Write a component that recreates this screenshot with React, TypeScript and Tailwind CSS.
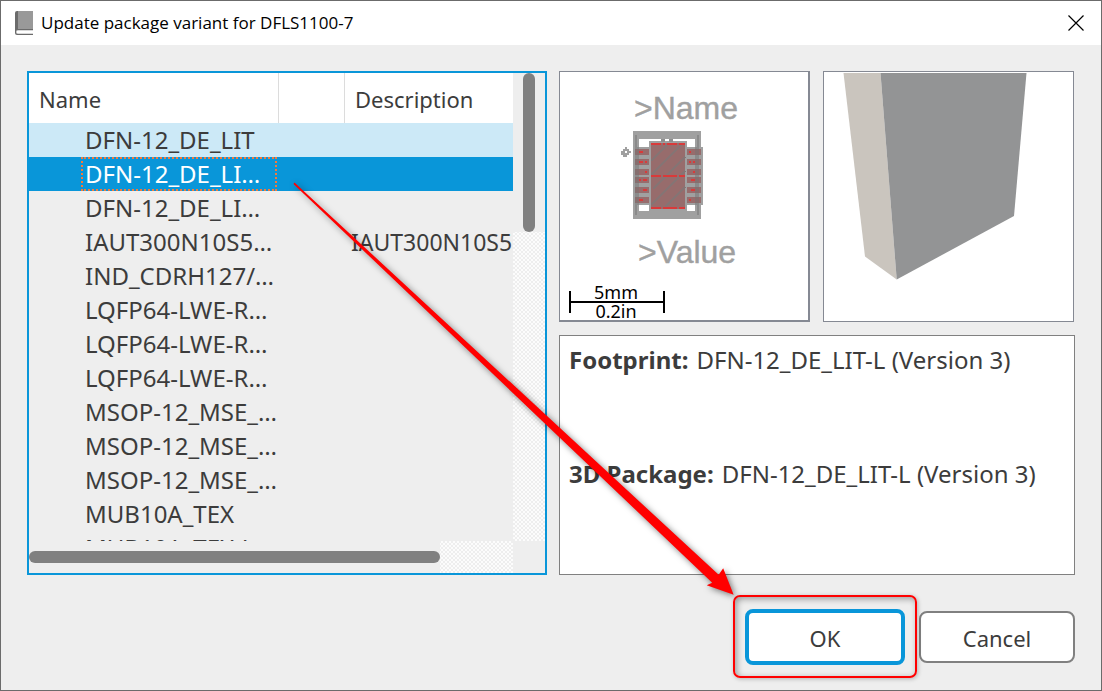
type Row = { name: string; description?: string; state?: "group" | "selected" };

const rows: Row[] = [
  { name: "DFN-12_DE_LIT", state: "group" },
  { name: "DFN-12_DE_LI…", state: "selected" },
  { name: "DFN-12_DE_LI…" },
  { name: "IAUT300N10S5…", description: "IAUT300N10S5" },
  { name: "IND_CDRH127/…" },
  { name: "LQFP64-LWE-R…" },
  { name: "LQFP64-LWE-R…" },
  { name: "LQFP64-LWE-R…" },
  { name: "MSOP-12_MSE_…" },
  { name: "MSOP-12_MSE_…" },
  { name: "MSOP-12_MSE_…" },
  { name: "MUB10A_TEX" },
  { name: "MUB10A_TEX-L" },
];

const rowStyle = {
  group: "bg-[#cce9f7]",
  selected: "bg-[#0996d9] text-white",
};

const dither =
  "bg-[repeating-conic-gradient(#eeeeee_0_25%,#fcfcfc_0_50%)] bg-[length:4px_4px]";

function BookIcon() {
  return (
    <svg width="20" height="26" viewBox="0 0 20 26" aria-hidden="true">
      <path d="M3 1H19V25H3Q1 25 1 23V3Q1 1 3 1Z" fill="#6b6b6b" />
      <rect x="4" y="1" width="15" height="18" fill="#999" />
      <path d="M4 20H19V24H4Q2 24 2 22T4 20Z" fill="#d8d8d8" />
      <rect x="3" y="21" width="16" height="2" fill="#fff" />
    </svg>
  );
}

function VariantTable() {
  return (
    <section className="flex min-w-0 flex-col border-2 border-[#0996d9]">
      <div className="flex min-h-0 flex-1">
        <div className="h-0 min-h-full min-w-0 flex-1 overflow-hidden">
          <table className="w-full table-fixed border-separate border-spacing-0 whitespace-nowrap">
            <colgroup>
              <col className="w-[250px]" />
              <col className="w-[66px]" />
              <col />
            </colgroup>
            <thead>
              <tr className="bg-white text-left text-[22px]">
                <th className="h-[50px] border-r border-[#dcdcdc] px-[10px] pt-[2px] pb-0 font-normal">Name</th>
                <th className="border-r border-[#dcdcdc]" aria-label="Type" />
                <th className="px-[10px] pt-[2px] pb-0 font-normal">Description</th>
              </tr>
            </thead>
            <tbody>
              {rows.map((row, i) => (
                <tr key={i} className={row.state && rowStyle[row.state]}>
                  <td className="h-[34px] p-0 pr-[2px] pl-[52px]">
                    <div
                      className={
                        row.state === "selected"
                          ? "h-[34px] overflow-hidden border-2 border-dotted border-[#f47a3c] px-[2px] leading-[30px]"
                          : "h-[34px] overflow-hidden px-[4px] leading-[34px]"
                      }
                    >
                      {row.name}
                    </div>
                  </td>
                  <td className="p-0" />
                  <td className="overflow-hidden p-0 pl-[6px] text-[23px]">{row.description}</td>
                </tr>
              ))}
            </tbody>
          </table>
        </div>
        <div className={`flex w-[32px] flex-col ${dither}`}>
          <div className="flex h-[34%] justify-center bg-[#eeeeee]">
            <div className="w-[12px] rounded-full bg-[#808080]" />
          </div>
        </div>
      </div>
      <div className="flex h-[32px]">
        <div className={`min-w-0 flex-1 ${dither}`}>
          <div className="flex h-full w-[85%] items-center bg-[#eeeeee]">
            <div className="h-[12px] w-full rounded-full bg-[#808080]" />
          </div>
        </div>
        <div className="w-[32px]" />
      </div>
    </section>
  );
}

const pads = [
  { y: 78, marks: [[80, 4], [130, 2]] },
  { y: 88, marks: [[80, 4], [86, 2], [130, 2], [134, 2]] },
  { y: 98, marks: [[86, 2], [134, 2]] },
  { y: 106, marks: [[80, 2], [84, 4], [132, 4]] },
  { y: 116, marks: [[84, 4], [132, 4]] },
  { y: 126, marks: [[80, 4], [130, 2]] },
];

function FootprintPreview() {
  return (
    <svg
      viewBox="1 1 248 248"
      className="block h-full w-full"
      role="img"
      aria-label="Footprint preview"
      shapeRendering="crispEdges"
    >
      <g fill="#a0a0a0" stroke="#a0a0a0" strokeWidth="0.400" fontFamily="Liberation Sans, sans-serif" fontSize="32">
        <text x="75" y="48">&gt;Name</text>
        <text x="79" y="192">&gt;Value</text>
      </g>
      <rect x="74" y="60" width="68" height="88" fill="#a0a0a0" />
      <rect x="74" y="76" width="70" height="58" fill="#a0a0a0" />
      <path d="M80 68H136V76H128V70H90V76H80ZM80 134H90V140H80ZM128 134H136V140H128Z" fill="#fff" />
      <path d="M102 68h4v3h-4zM110 68h4v3h-4z" fill="#8e8e8e" />
      <path d="M76 64h2v80h-2zM138 64h2v80h-2zM78 76h2v58h-2zM136 76h2v58h-2z" fill="#8a8a8a" />
      {pads.map(({ y, marks }) => (
        <g key={y}>
          <path d={`M80 ${y}h10v6h-10zM128 ${y}h14v6h-14z`} fill="#976c6c" />
          <path d={`M76 ${y}h4v6h-4zM136 ${y}h4v6h-4z`} fill="#866f6f" />
          {marks.map(([x, w]) => (
            <rect key={x} x={x} y={y + 2} width={w} height="2" fill="#d93a3a" />
          ))}
        </g>
      ))}
      <rect x="92" y="72" width="34" height="66" fill="#976c6c" />
      <path
        d="M92 90L108 74M92 104L122 74M94 118L126 86M92 134L126 100M106 136L126 116"
        stroke="#857474"
        strokeWidth="1.500"
      />
      <path
        d="M92 73H102M104 73H106M108 73H118M120 73H126M92 105H102M104 105H118M120 105H126M92 137H102M104 137H118M120 137H126"
        stroke="#d93a3a"
        strokeWidth="2"
      />
      <path
        d="M66 76h2v2h2v2h2v2h-2v2h-2v2h-4v-2h-2v-4h2v-2h2zM66 80v2h2v-2z"
        fill="#a0a0a0"
        fillRule="evenodd"
      />
      <path d="M11 220V242M105 220V242M11 231H105" stroke="#000" strokeWidth="2" fill="none" />
      <g fontFamily="Noto Sans, sans-serif" fontSize="18" textAnchor="middle" fill="#000">
        <text x="57" y="228">5mm</text>
        <text x="57" y="247">0.2in</text>
      </g>
    </svg>
  );
}

function PackagePreview() {
  return (
    <svg viewBox="1 1 249 249" className="block h-full w-full" role="img" aria-label="3D package preview">
      <path d="M20.500 2H57.500L73.700 208.500L42 185.500Z" fill="#cac5be" />
      <path d="M57.500 2H203.500L191 145L73.700 208.500Z" fill="#939495" />
    </svg>
  );
}

function Pointer() {
  return (
    <svg
      viewBox="0 0 1102 691"
      preserveAspectRatio="none"
      className="pointer-events-none absolute inset-0 h-full w-full"
      aria-hidden="true"
    >
      <path
        d="M294 182L719 575.500L723.500 569L734 595.500L707 586L712.500 583.500L293 183.500Z"
        fill="#f00"
        className="drop-shadow-[2px_2px_3px_rgba(0,0,0,0.5)]"
      />
    </svg>
  );
}

export default function App() {
  return (
    <div className="relative flex h-screen min-h-[600px] flex-col border border-[#6b6b6b] bg-[#eeeeee] font-['Noto_Sans',sans-serif] text-[24px] leading-[34px] text-[#3c3c3c]">
      <header className="flex h-[44px] shrink-0 items-center gap-[7px] bg-white pr-[17px] pl-[13px]">
        <BookIcon />
        <h1 className="flex-1 font-['Open_Sans',sans-serif] text-[17px] text-black">
          Update package variant for DFLS1100-7
        </h1>
        <button type="button" aria-label="Close">
          <svg width="16" height="16" viewBox="0 0 16 16" fill="none" stroke="#000" strokeWidth="1.200">
            <path d="M0.500 0.500L15.500 15.500M15.500 0.500L0.500 15.500" />
          </svg>
        </button>
      </header>

      <main className="flex min-h-0 flex-1 flex-col px-[26px] pt-[26px] pb-[25px]">
        <div className="grid min-h-0 flex-1 grid-cols-[520fr_516fr] gap-[12px]">
          <VariantTable />
          <div className="flex min-w-0 flex-col gap-[13px]">
            <div className="grid grid-cols-2 gap-[13px] pr-[1px]">
              <div className="aspect-square border border-r-2 border-b-2 border-[#858993] bg-white">
                <FootprintPreview />
              </div>
              <div className="aspect-square border border-[#858993] bg-white">
                <PackagePreview />
              </div>
            </div>
            <dl className="flex flex-1 flex-col gap-[80px] border border-[#808080] bg-white px-[9px] py-[7px]">
              <div className="flex gap-[8px]">
                <dt className="font-bold">Footprint:</dt>
                <dd>DFN-12_DE_LIT-L (Version 3)</dd>
              </div>
              <div className="flex gap-[8px]">
                <dt className="font-bold">3D Package:</dt>
                <dd>DFN-12_DE_LIT-L (Version 3)</dd>
              </div>
            </dl>
          </div>
        </div>
        <footer className="mt-[34px] flex items-center justify-end gap-[14px] text-[22px]">
          <div className="relative">
            <button
              type="button"
              className="block h-[56px] w-[160px] rounded-[8px] border-4 border-[#0996d9] bg-white pt-[2px]"
            >
              OK
            </button>
            <div className="pointer-events-none absolute -inset-x-[12px] -top-[14px] -bottom-[13px] rounded-[7px] border-2 border-[#f00] shadow-[inset_2px_2px_6px_rgba(0,0,0,0.35),1px_1px_4px_rgba(0,0,0,0.25)]" />
          </div>
          <button
            type="button"
            className="h-[52px] w-[156px] rounded-[8px] border-2 border-[#808080] bg-white pt-[2px]"
          >
            Cancel
          </button>
        </footer>
      </main>
      <Pointer />
    </div>
  );
}
